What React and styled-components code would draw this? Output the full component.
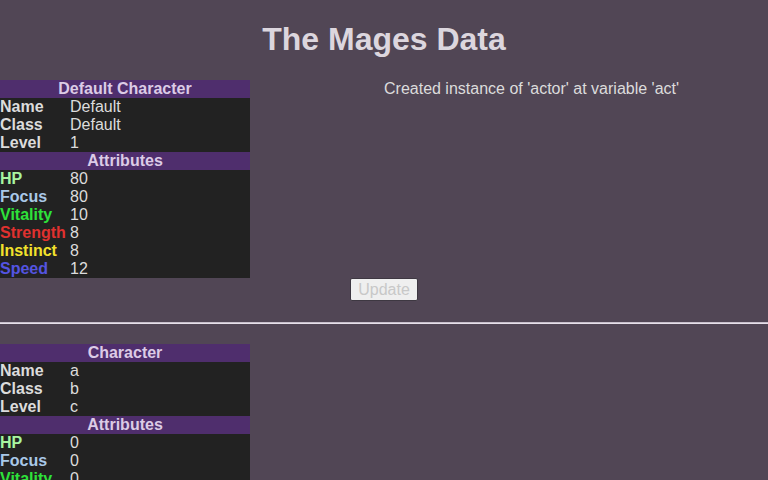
import React from 'react';
import styled, { createGlobalStyle } from 'styled-components';

const GlobalStyle = createGlobalStyle`
    html, body {
        margin: 0;
        padding: 0;
        background: #514655;
        font-family: "Liberation Sans", Arial, sans-serif;
        color: #dcdcdc;
        overflow: hidden;
    }
`

const defaultChar = {
    title: 'Default Character',
    name: 'Default',
    klass: 'Default',
    level: '1',
    stats: { hp: 80, focus: 80, vitality: 10, strength: 8, instinct: 8, speed: 12 },
}

const newChar = {
    title: 'Character',
    name: 'a',
    klass: 'b',
    level: 'c',
    stats: { hp: 0, focus: 0, vitality: 0, strength: 0, instinct: 0, speed: 0 },
}

const statRows = [
    { key: 'hp', label: 'HP', color: '#a8f5a0' },
    { key: 'focus', label: 'Focus', color: '#a9c8e8' },
    { key: 'vitality', label: 'Vitality', color: '#2ee23a' },
    { key: 'strength', label: 'Strength', color: '#e0312f' },
    { key: 'instinct', label: 'Instinct', color: '#f2e12c' },
    { key: 'speed', label: 'Speed', color: '#5454e0' },
]

const CharacterTable = ({ data }) => {
    return (
        <Table>
            <HeadRow>{data.title}</HeadRow>
            <Label>Name</Label><Value>{data.name}</Value>
            <Label>Class</Label><Value>{data.klass}</Value>
            <Label>Level</Label><Value>{data.level}</Value>
            <HeadRow>Attributes</HeadRow>
            {statRows.map((row) => (
                <React.Fragment key={row.key}>
                    <Label color={row.color}>{row.label}</Label>
                    <Value>{data.stats[row.key]}</Value>
                </React.Fragment>
            ))}
        </Table>
    )
}

const App = () => {
    return (
        <Page>
            <GlobalStyle />
            <Title>The Mages Data</Title>

            {/* 상단 : 기본 캐릭터 + 메시지 */}
            <TopSection>
                <Half>
                    <CharacterTable data={defaultChar} />
                </Half>
                <Half>
                    <Message>Created instance of 'actor' at variable 'act'</Message>
                </Half>
            </TopSection>

            <ButtonRow>
                <UpdateButton disabled>Update</UpdateButton>
            </ButtonRow>

            <Divider />

            <CharacterTable data={newChar} />
        </Page>
    )
}

export default App;


const Page = styled.div`
    width: 768px;
    height: 480px;
    overflow: hidden;
`

const Title = styled.h1`
    margin: 0;
    padding: 21px 0 22px;
    height: 37px;
    line-height: 37px;
    text-align: center;
    font-size: 32px;
    font-weight: 700;
    color: #dcd6de;
`

const TopSection = styled.div`
    display: flex;
`

const Half = styled.div`
    width: 50%;
`

const Message = styled.div`
    font-size: 16px;
    line-height: 18px;
    color: #dcdcdc;
`

// ----- 캐릭터 테이블
const Table = styled.div`
    width: 250px;
    display: grid;
    grid-template-columns: 70px 1fr;
    background: #222222;
    font-size: 16px;
    line-height: 18px;
`

const HeadRow = styled.div`
    grid-column: 1 / -1;
    background: #4f2e6d;
    color: #dccbe6;
    font-weight: 700;
    text-align: center;
    height: 18px;
`

const Label = styled.div`
    font-weight: 700;
    color: ${(props) => props.color || '#dcdcdc'};
    white-space: nowrap;
    height: 18px;
`

const Value = styled.div`
    color: #dcdcdc;
    height: 18px;
`

// ----- 버튼
const ButtonRow = styled.div`
    display: flex;
    justify-content: center;
    padding-bottom: 21px;
`

const UpdateButton = styled.button`
    width: 68px;
    height: 23px;
    padding: 0;
    font-family: "Liberation Sans", Arial, sans-serif;
    font-size: 16px;
    line-height: 19px;
    background: #efefef;
    color: #c8c8c8;
    border: 1px solid #3e3842;
    border-radius: 2px;
`

const Divider = styled.hr`
    margin: 0 0 20px;
    height: 0;
    border: none;
    border-top: 1px solid #c8c0cc;
    border-bottom: 1px solid #e6e0ea;
`
